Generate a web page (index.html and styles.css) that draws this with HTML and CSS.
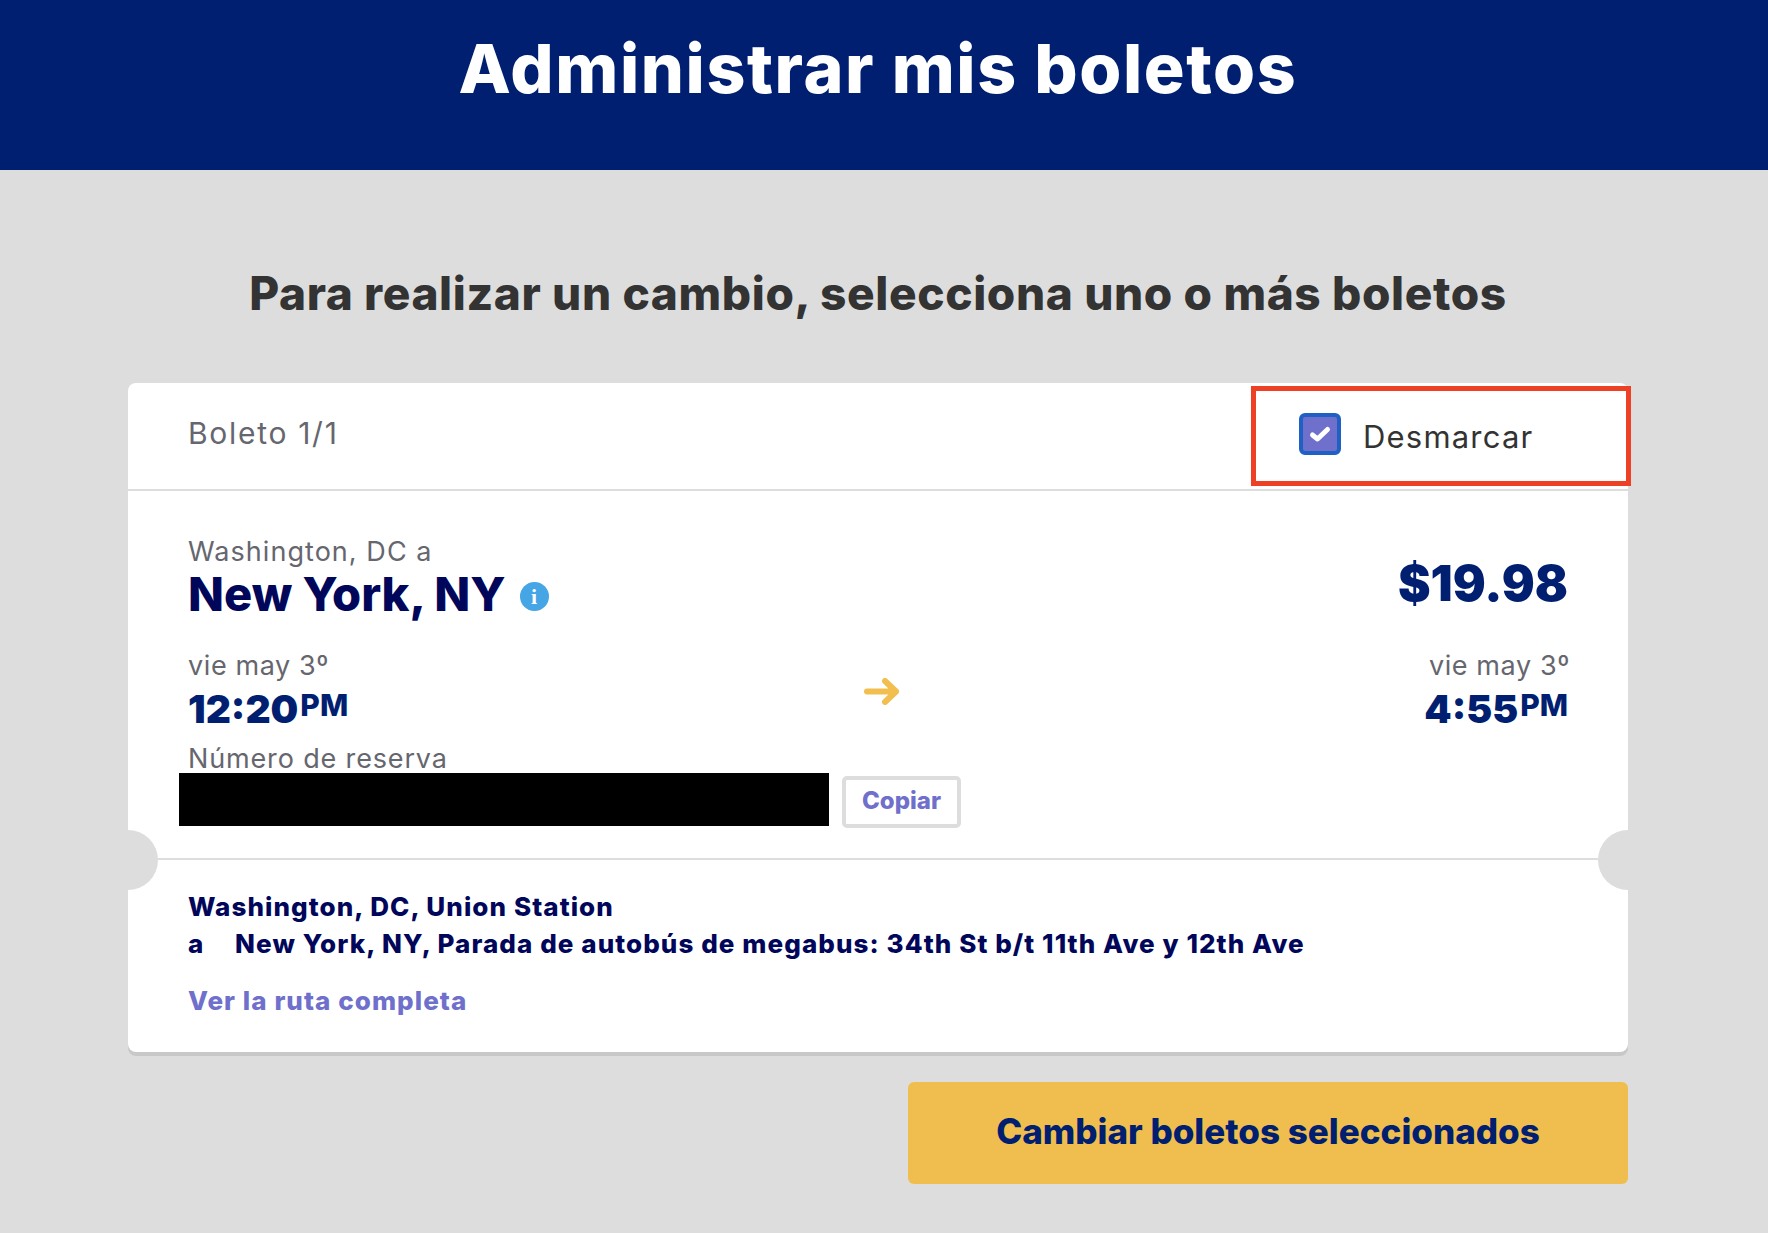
FILE: index.html
```html
<!DOCTYPE html>
<html lang="es">

<head>
    <meta charset="UTF-8">
    <title>Administrar mis boletos</title>
    <link rel="stylesheet" href="styles.css">
</head>

<body>
    <header class="page-header">
        <h1>Administrar mis boletos</h1>
    </header>

    <main class="content">
        <h2 class="prompt">Para realizar un cambio, selecciona uno o más boletos</h2>

        <section class="ticket">
            <div class="ticket-head">
                <span class="ticket-count">Boleto 1/1</span>
                <label class="select-box">
                    <span class="checkbox">
                        <svg width="34" height="34" viewBox="0 0 34 34">
                            <path d="M9.5 18 L14.5 22 L24.5 12.5" fill="none" stroke="#fff" stroke-width="5" stroke-linecap="round" stroke-linejoin="round" />
                        </svg>
                    </span>
                    <span class="select-label">Desmarcar</span>
                </label>
            </div>

            <div class="ticket-body">
                <div class="route">
                    <div>
                        <div class="origin">Washington, DC a</div>
                        <div class="destination">New York, NY <span class="info">i</span></div>
                    </div>
                    <div class="price">$19.98</div>
                </div>

                <div class="times">
                    <div>
                        <div class="date">vie may 3º</div>
                        <div class="time">12:20<span class="ampm">PM</span></div>
                    </div>
                    <svg class="arrow" width="36" height="27" viewBox="0 0 36 27">
                        <path d="M3 13.5 H32 M21 3 L32 13.5 L21 24" fill="none" stroke="#f2bf4f" stroke-width="6" stroke-linecap="round" stroke-linejoin="round" />
                    </svg>
                    <div class="arrive">
                        <div class="date">vie may 3º</div>
                        <div class="time">4:55<span class="ampm">PM</span></div>
                    </div>
                </div>

                <div class="reservation-label">Número de reserva</div>
                <div class="reservation">
                    <div class="redacted"></div>
                    <button type="button" class="copy">Copiar</button>
                </div>
            </div>

            <div class="stops">
                <div class="stop">Washington, DC, Union Station</div>
                <div class="stop"><span class="stop-a">a</span>New York, NY, Parada de autobús de megabus: 34th St b/t 11th Ave y 12th Ave</div>
                <a class="full-route" href="#">Ver la ruta completa</a>
            </div>

            <div class="notch notch-left"></div>
            <div class="notch notch-right"></div>
        </section>

        <div class="actions">
            <button type="button" class="change">Cambiar boletos seleccionados</button>
        </div>
    </main>
</body>

</html>
```

FILE: styles.css
```css
* {
    margin: 0;
    padding: 0;
    box-sizing: border-box;
    font-family: 'Inter', 'Liberation Sans', sans-serif;
}

body {
    min-height: 100vh;
    background: #ddd;
    color: #333;
}

.page-header {
    height: 170px;
    background: #001f70;
    display: flex;
    justify-content: center;
    padding: 28px 12px 0 0;
}

.page-header h1 {
    font-size: 68px;
    line-height: 80px;
    font-weight: 800;
    letter-spacing: 1.6px;
    color: #fff;
}

.content {
    width: 1500px;
    margin-left: 128px;
}

.prompt {
    margin-top: 95px;
    height: 118px;
    font-size: 46px;
    line-height: 56px;
    font-weight: 800;
    letter-spacing: 0.62px;
    text-align: center;
    color: #333;
}

.ticket {
    position: relative;
    background: #fff;
    border-radius: 8px;
    box-shadow: 0 4px 0 #c8c8c8;
}

.ticket-head {
    height: 108px;
    border-bottom: 2px solid #ddd;
    padding-left: 60px;
    display: flex;
    justify-content: space-between;
    align-items: center;
}

.ticket-count {
    font-size: 30px;
    letter-spacing: 1.7px;
    color: #66666e;
    margin-bottom: 6px;
}

.select-box {
    width: 380px;
    height: 100px;
    margin-right: -3px;
    border: 5px solid #ee4024;
    padding-left: 43px;
    display: flex;
    align-items: center;
    gap: 22px;
}

.checkbox {
    width: 42px;
    height: 42px;
    margin-bottom: 4px;
    background: #6f6fcc;
    border: 4px solid #2060c4;
    border-radius: 6px;
}

.checkbox svg {
    display: block;
}

.select-label {
    font-size: 31px;
    letter-spacing: 1.2px;
    color: #333;
}

.ticket-body {
    padding: 46px 60px 30px 60px;
}

.route {
    display: flex;
    justify-content: space-between;
}

.origin {
    font-size: 27px;
    line-height: 30px;
    letter-spacing: 1.05px;
    color: #66666e;
}

.destination {
    margin-top: 2px;
    font-size: 47px;
    line-height: 50px;
    font-weight: 800;
    color: #00065a;
    display: flex;
    align-items: center;
}

.info {
    width: 29px;
    height: 29px;
    margin: 4px 0 0 14px;
    border-radius: 50%;
    background: #45a5e5;
    color: #fff;
    font-family: 'Liberation Serif', serif;
    font-size: 22px;
    font-weight: 700;
    line-height: 29px;
    text-align: center;
}

.price {
    margin-top: 19px;
    font-size: 49px;
    line-height: 56px;
    font-weight: 900;
    color: #001f70;
}

.times {
    margin-top: 32px;
    display: grid;
    grid-template-columns: 1fr auto 1fr;
    align-items: center;
}

.arrow {
    margin-left: 8px;
}

.arrive {
    text-align: right;
}

.arrive .date {
    margin-right: -2px;
}

.date {
    font-size: 27px;
    line-height: 30px;
    letter-spacing: 0.6px;
    color: #66666e;
}

.time {
    margin-top: 6px;
    font-size: 39px;
    line-height: 44px;
    font-weight: 900;
    color: #001f70;
}

.ampm {
    font-size: 30px;
    line-height: 0;
    font-weight: 800;
    margin-left: 2px;
    vertical-align: 7px;
}

.reservation-label {
    margin-top: 13px;
    font-size: 27px;
    line-height: 30px;
    letter-spacing: 0.85px;
    color: #66666e;
}

.reservation {
    margin: -1px 0 0 -9px;
    display: flex;
    gap: 13px;
    align-items: flex-start;
}

.redacted {
    width: 650px;
    height: 53px;
    background: #000;
}

.copy {
    margin-top: 3px;
    width: 119px;
    height: 52px;
    padding-bottom: 3px;
    background: #fff;
    border: 4px solid #ddd;
    border-radius: 5px;
    font-size: 24px;
    font-weight: 800;
    color: #6f6fcc;
}

.stops {
    margin: 0 30px;
    padding: 28px 30px 34px 30px;
    border-top: 2px solid #ddd;
}

.stop {
    font-size: 26px;
    line-height: 37px;
    font-weight: 800;
    letter-spacing: 1.08px;
    color: #00065a;
}

.stop-a {
    display: inline-block;
    width: 47px;
}

.full-route {
    display: block;
    margin-top: 21px;
    font-size: 26px;
    line-height: 35px;
    font-weight: 800;
    letter-spacing: 1.07px;
    color: #6f6fcc;
    text-decoration: none;
}

.notch {
    position: absolute;
    top: 447px;
    width: 60px;
    height: 60px;
    border-radius: 50%;
    background: #ddd;
}

.notch-left {
    left: -30px;
}

.notch-right {
    right: -30px;
}

.actions {
    margin-top: 30px;
    display: flex;
    justify-content: flex-end;
}

.change {
    width: 720px;
    height: 102px;
    padding-bottom: 5px;
    background: #f0be4e;
    border: none;
    border-radius: 6px;
    font-size: 35px;
    font-weight: 800;
    color: #001f70;
}
```
